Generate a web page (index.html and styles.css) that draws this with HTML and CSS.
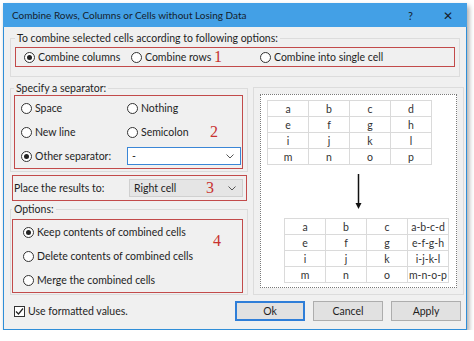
FILE: index.html
```html
<!DOCTYPE html>
<html lang="en">
<head>
    <meta charset="utf-8">
    <title>Combine Rows, Columns or Cells</title>
    <link rel="stylesheet" href="styles.css">
</head>
<body>

    <div class="dialog">
        <div class="titlebar">
            <span class="title">Combine Rows, Columns or Cells without Losing Data</span>
            <span class="help">?</span>
            <span class="close">✕</span>
        </div>

        <div class="content">
            <fieldset class="group group-top">
                <legend>To combine selected cells according to following options:</legend>
                <div class="mark combine">
                    <label class="radio c1"><span class="dot on"></span>Combine columns</label>
                    <label class="radio c2"><span class="dot"></span>Combine rows</label>
                    <span class="num c3">1</span>
                    <label class="radio"><span class="dot"></span>Combine into single cell</label>
                </div>
            </fieldset>

            <div class="columns">
                <div class="left">
                    <fieldset class="group sep">
                        <legend>Specify a separator:</legend>
                        <div class="mark sep-grid">
                            <label class="radio"><span class="dot"></span>Space</label>
                            <label class="radio"><span class="dot"></span>Nothing</label>
                            <label class="radio"><span class="dot"></span>New line</label>
                            <div class="with-num">
                                <label class="radio"><span class="dot"></span>Semicolon</label>
                                <span class="num">2</span>
                            </div>
                            <label class="radio"><span class="dot on"></span>Other separator:</label>
                            <div class="input">
                                <span>-</span>
                                <svg class="chev" width="8" height="5" viewBox="0 0 8 5"><path d="M0.5 0.5 L4 4 L7.5 0.5" fill="none" stroke="#555" stroke-width="1"/></svg>
                            </div>
                        </div>
                    </fieldset>

                    <div class="mark place">
                        <span>Place the results to:</span>
                        <div class="combo">
                            <span>Right cell</span>
                            <span class="num">3</span>
                            <svg class="chev" width="8" height="5" viewBox="0 0 8 5"><path d="M0.5 0.5 L4 4 L7.5 0.5" fill="none" stroke="#555" stroke-width="1"/></svg>
                        </div>
                    </div>

                    <fieldset class="group options">
                        <legend>Options:</legend>
                        <div class="mark opt-list">
                            <label class="radio"><span class="dot on"></span>Keep contents of combined cells</label>
                            <label class="radio"><span class="dot"></span>Delete contents of combined cells</label>
                            <label class="radio"><span class="dot"></span>Merge the combined cells</label>
                            <span class="num num4">4</span>
                        </div>
                    </fieldset>
                </div>

                <fieldset class="group preview">
                    <div class="canvas">
                        <table class="grid before">
                            <tr><td>a</td><td>b</td><td>c</td><td>d</td></tr>
                            <tr><td>e</td><td>f</td><td>g</td><td>h</td></tr>
                            <tr><td>i</td><td>j</td><td>k</td><td>l</td></tr>
                            <tr><td>m</td><td>n</td><td>o</td><td>p</td></tr>
                        </table>
                        <svg class="arrow" width="9" height="35" viewBox="0 0 9 35">
                            <line x1="4.5" y1="0" x2="4.5" y2="30" stroke="#111" stroke-width="1.5"/>
                            <path d="M1.5 29 L4.5 35 L7.5 29 Z" fill="#111"/>
                        </svg>
                        <table class="grid after">
                            <tr><td>a</td><td>b</td><td>c</td><td>a-b-c-d</td></tr>
                            <tr><td>e</td><td>f</td><td>g</td><td>e-f-g-h</td></tr>
                            <tr><td>i</td><td>j</td><td>k</td><td>i-j-k-l</td></tr>
                            <tr><td>m</td><td>n</td><td>o</td><td>m-n-o-p</td></tr>
                        </table>
                    </div>
                </fieldset>
            </div>

            <div class="footer">
                <label class="check">
                    <span class="box"><svg width="9" height="9" viewBox="0 0 9 9"><path d="M1 4.5 L3.5 7 L8 1.5" fill="none" stroke="#222" stroke-width="1.2"/></svg></span>
                    Use formatted values.
                </label>
                <div class="buttons">
                    <button class="btn default">Ok</button>
                    <button class="btn">Cancel</button>
                    <button class="btn">Apply</button>
                </div>
            </div>
        </div>
    </div>

</body>
</html>
```

FILE: styles.css
```css
body {
    margin: 0;
    background-color: #ffffff;
    font-family: Lato, "Noto Sans", sans-serif;
    font-size: 10.5px;
    color: #1e1e1e;
}

.dialog {
    box-sizing: border-box;
    width: 464px;
    margin: 3px 0 0 3px;
    border: 1px solid #2f8ed8;
    border-top: 0;
    background-color: #f0f0f0;
    box-shadow: 2px 3px 5px rgba(0, 0, 0, 0.35);
}

.titlebar {
    display: flex;
    align-items: center;
    height: 24px;
    margin: 0 -1px;
    padding: 0 14px 0 9px;
    background-color: #43a0e6;
    color: #15202b;
}

.title {
    flex: 1;
    font-size: 10px;
}

.help {
    margin-right: 30px;
    font-size: 11px;
}

.close {
    font-size: 12px;
}

.content {
    padding: 4px 4px 8px 6px;
}

.group {
    margin: 0;
    border: 1px solid #dcdcdc;
    padding: 0 4px 0 4px;
}

.group legend {
    padding: 0 2px;
    line-height: 14px;
}

.mark {
    border: 1px solid #c24a4a;
}

.num {
    font-family: "Liberation Serif", serif;
    font-size: 16px;
    line-height: 16px;
    color: #c8322f;
}

.radio {
    display: flex;
    align-items: center;
    white-space: nowrap;
}

.dot {
    box-sizing: border-box;
    width: 11px;
    height: 11px;
    margin-right: 3px;
    border: 1px solid #333;
    border-radius: 50%;
    background-color: #fff;
    display: flex;
    align-items: center;
    justify-content: center;
}

.dot.on::after {
    content: "";
    width: 5px;
    height: 5px;
    border-radius: 50%;
    background-color: #222;
}

/* top group */
.group-top {
    margin-right: 2px;
    padding-bottom: 9px;
}

.combine {
    display: flex;
    align-items: center;
    height: 18px;
    margin-top: 2px;
    padding-left: 8px;
}

.c1 {
    width: 107px;
}

.c2 {
    width: 83px;
}

.c3 {
    width: 46px;
}

/* left and right columns */
.columns {
    display: grid;
    grid-template-columns: 238px 1fr;
    gap: 5px;
    margin-top: 4px;
}

.sep {
    padding: 0 4px 2px 3px;
}

.sep-grid {
    display: grid;
    grid-template-columns: 106px 1fr;
    grid-auto-rows: 24px;
    align-items: center;
    padding: 0 1px 0 6px;
}

.with-num {
    display: flex;
    align-items: center;
    justify-content: space-between;
    padding-right: 23px;
}

.input,
.combo {
    box-sizing: border-box;
    display: flex;
    align-items: center;
    height: 18px;
    padding: 0 6px 0 4px;
}

.input {
    border: 1px solid #3a86d6;
    background-color: #fff;
}

.input span {
    flex: 1;
}

.place {
    display: flex;
    align-items: center;
    height: 24px;
    margin: 3px 1px 0 2px;
    padding-left: 1px;
}

.place > span {
    width: 115px;
}

.combo {
    width: 114px;
    background-color: #e5e5e5;
    border: 1px solid #d0d0d0;
}

.combo span:first-child {
    flex: 1;
}

.combo .num {
    margin-right: 14px;
}

.options {
    margin-top: 1px;
    padding: 0 4px 1px 1px;
}

.opt-list {
    position: relative;
    display: grid;
    grid-auto-rows: 24px;
    align-items: center;
    margin-top: 3px;
    padding-left: 10px;
}

.num4 {
    position: absolute;
    left: 200px;
    top: 13px;
}

.preview {
    margin-top: 6px;
    margin-right: -2px;
    padding: 6px;
    display: flex;
}

.canvas {
    flex: 1;
    display: flex;
    flex-direction: column;
    border: 1px dotted #7a7a7a;
    background-color: #fff;
}

.grid {
    width: 165px;
    border-collapse: collapse;
    table-layout: fixed;
}

.grid td {
    height: 15px;
    padding: 0;
    border: 1px solid #dadada;
    text-align: center;
    line-height: 14px;
    color: #333;
}

.before {
    margin: 5px 0 0 6px;
}

.arrow {
    align-self: center;
    margin-top: 9px;
}

.after {
    margin: 9px 7px 0 auto;
}

/* footer */
.footer {
    display: flex;
    align-items: center;
    justify-content: space-between;
    margin-top: 6px;
}

.check {
    display: flex;
    align-items: center;
    gap: 3px;
    padding-left: 4px;
}

.box {
    box-sizing: border-box;
    width: 11px;
    height: 11px;
    border: 1px solid #333;
    background-color: #fff;
    display: flex;
    align-items: center;
    justify-content: center;
}

.buttons {
    display: flex;
    gap: 8px;
    margin-right: 1px;
}

.btn {
    box-sizing: border-box;
    width: 70px;
    height: 20px;
    border: 1px solid #adadad;
    background-color: #e1e1e1;
    font-family: Lato, "Noto Sans", sans-serif;
    font-size: 10.5px;
    color: #1e1e1e;
    padding: 0;
}

.btn.default {
    border: 2px solid #2f7ed8;
}
```
